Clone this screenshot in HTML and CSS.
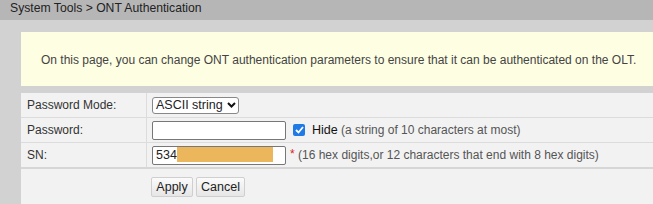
FILE: index.html
```html
<!DOCTYPE html>
<html>
<head>
<meta charset="utf-8">
<link rel="stylesheet" href="styles.css">
</head>
<body>
<div class="title">System Tools &gt; ONT Authentication</div>
<div class="main">
  <div class="note">On this page, you can change ONT authentication parameters to ensure that it can be authenticated on the OLT.</div>
  <table class="form">
    <tr>
      <td class="label">Password Mode:</td>
      <td class="value"><span class="sel">ASCII string<svg class="chev" width="9" height="6" viewBox="0 0 9 6"><path d="M1 1 L4.5 4.5 L8 1" fill="none" stroke="#111" stroke-width="2"/></svg></span></td>
    </tr>
    <tr>
      <td class="label">Password:</td>
      <td class="value"><span class="txt"></span><span class="chk"><svg width="9" height="8" viewBox="0 0 9 8"><path d="M1 4 L3.5 6.5 L8 1" fill="none" stroke="#fff" stroke-width="1.8"/></svg></span><span class="dark">Hide</span> <span class="hint">(a string of 10 characters at most)</span></td>
    </tr>
    <tr>
      <td class="label">SN:</td>
      <td class="value"><span class="txt sn">534<span class="mask"></span></span><span class="star">*</span> <span class="hint">(16 hex digits,or 12 characters that end with 8 hex digits)</span></td>
    </tr>
  </table>
  <div class="buttons">
    <span class="btn apply">Apply</span><span class="btn cancel">Cancel</span>
  </div>
</div>
</body>
</html>
```
FILE: styles.css
```css
html, body {
  margin: 0;
  padding: 0;
  background: #d2d2d2;
  font-family: "Liberation Sans", Arial, sans-serif;
  font-size: 12px;
  color: #333;
  overflow: hidden;
}
.title {
  height: 20px;
  line-height: 17px;
  background: #b6b6b6;
  padding-left: 10px;
  color: #222;
  font-size: 12.2px;
}
.main {
  padding: 12px 0 0 21px;
}
.note {
  height: 54px;
  line-height: 57px;
  background: #fefee3;
  padding-left: 20px;
  color: #444;
  white-space: nowrap;
}
.form {
  margin-top: 7px;
  width: 100%;
  border-collapse: collapse;
  background: #f2f2f2;
}
.form td {
  height: 24px;
  padding: 0;
  border-bottom: 1px solid #dcdcdc;
  vertical-align: middle;
}
.form tr:last-child td {
  border-bottom: 2px solid #d6d6d6;
}
.label {
  width: 119px;
  padding-left: 6px !important;
  border-right: 1px solid #dcdcdc;
  color: #333;
}
.value {
  padding-left: 5px !important;
  white-space: nowrap;
}
.sel {
  display: inline-flex;
  align-items: center;
  box-sizing: border-box;
  height: 17px;
  width: 87px;
  padding: 0 0 0 3px;
  border: 1px solid #888;
  border-radius: 3px;
  background: #fff;
  color: #222;
  vertical-align: middle;
  font-size: 12.5px;
}
.chev {
  margin-left: 4px;
}
.txt {
  display: inline-block;
  box-sizing: border-box;
  width: 134px;
  height: 19px;
  border: 1px solid #777;
  border-radius: 2px;
  background: #fff;
  padding: 0 3px;
  vertical-align: middle;
  margin: 0;
}
.sn {
  line-height: 17px;
  color: #222;
  font-size: 12.5px;
}
.mask {
  display: inline-block;
  width: 96px;
  height: 15px;
  background: #ebb65c;
  vertical-align: -3px;
}
.chk {
  display: inline-flex;
  align-items: center;
  justify-content: center;
  box-sizing: border-box;
  width: 12px;
  height: 12px;
  margin: 0 7px 0 7px;
  vertical-align: -1px;
  background: #1f7ae5;
  border-radius: 2px;
}
.dark {
  color: #111;
  font-size: 12.5px;
}
.hint {
  color: #555;
}
.star {
  color: #d22;
  margin-left: 4px;
}
.buttons {
  background: #f2f2f2;
  height: 40px;
  padding: 8px 0 0 130px;
  box-sizing: border-box;
  display: flex;
  gap: 3px;
}
.btn {
  display: inline-flex;
  align-items: center;
  justify-content: center;
  box-sizing: border-box;
  height: 20px;
  border: 1px solid #cfcfcf;
  border-radius: 2px;
  background: linear-gradient(#fbfbfb, #e6e6e6);
  color: #222;
  font-size: 12.5px;
}
.apply { width: 42px; }
.cancel { width: 49px; }
```
